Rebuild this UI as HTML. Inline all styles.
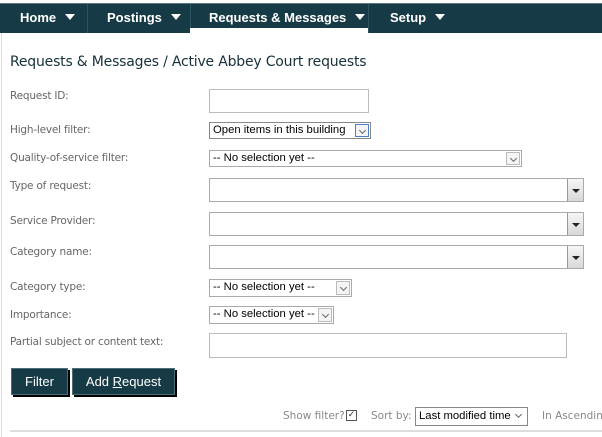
<!DOCTYPE html>
<html><head><style>
*{margin:0;padding:0;box-sizing:border-box}
body{width:602px;height:437px;background:#fff;position:relative;overflow:hidden;font-family:"DejaVu Sans","Liberation Sans",sans-serif}
.a{position:absolute}
.nav{left:0;top:3px;width:602px;height:30px;background:#173b46;border-top:1px solid #5a7a82}
.ni{position:absolute;top:0;height:29px;color:#fff;font-family:"Liberation Sans",sans-serif;font-size:13px;line-height:27px;font-weight:bold}
.tri{display:inline-block;width:0;height:0;border-left:5px solid transparent;border-right:5px solid transparent;border-top:6px solid #fff;margin-left:9px;vertical-align:2px}
.div{position:absolute;top:0;width:1px;height:29px;background:#2b5560}
.lbl{position:absolute;left:10px;font-size:10.5px;color:#666;letter-spacing:-0.2px}
.inp{position:absolute;border:1px solid #bbb;background:#fff}
.sel{position:absolute;border:1px solid #aaa;background:#fff;font-family:"Liberation Sans",sans-serif;font-size:11.3px;color:#000;padding-left:3px;line-height:15px;white-space:nowrap;overflow:hidden}
.arr{position:absolute;right:1px;top:1px;bottom:1px;width:14px;border:1px solid #bbb;background:#f4f4f4}
.arr:after{content:"";position:absolute;left:4px;top:3px;width:4px;height:4px;border-right:1px solid #666;border-bottom:1px solid #666;transform:rotate(45deg)}
.dd{position:absolute;right:0;top:0;bottom:0;width:16px;border-left:1px solid #999;background:linear-gradient(#f6f6f6,#d8d8d8)}
.dd:after{content:"";position:absolute;left:4px;top:10px;border-left:4px solid transparent;border-right:4px solid transparent;border-top:4px solid #222}
.btn{position:absolute;top:368px;height:27px;background:#173b46;color:#fff;font-family:"Liberation Sans",sans-serif;font-size:13px;line-height:25px;text-align:center;box-shadow:2px 2px 0 #000;border:1px solid #4d6e76}
</style></head><body>
<div class="a" style="left:1px;top:33px;width:1px;height:404px;background:#ddd"></div>
<div class="a nav">
 <div class="ni" style="left:20px">Home<span class="tri"></span></div>
 <div class="div" style="left:87px"></div>
 <div class="ni" style="left:107px">Postings<span class="tri"></span></div>
 <div class="div" style="left:190px"></div>
 <div class="ni" style="left:209px">Requests &amp; Messages<span class="tri"></span></div>
 <div class="div" style="left:368px"></div>
 <div class="ni" style="left:390px">Setup<span class="tri"></span></div>
</div>
<div class="a" style="left:190px;top:28px;width:178px;height:5px;background:#fff"></div>
<div class="a" style="left:10px;top:54px;font-size:14px;color:#17303a;letter-spacing:-0.2px">Requests &amp; Messages / Active Abbey Court requests</div>

<div class="lbl" style="top:90px">Request ID:</div>
<div class="inp" style="left:209px;top:89px;width:160px;height:24px"></div>

<div class="lbl" style="top:124px">High-level filter:</div>
<div class="sel" style="left:209px;top:122px;width:162px;height:17px;border-color:#888">Open items in this building<div class="arr" style="border-color:#4a7fc0"></div></div>

<div class="lbl" style="top:152px">Quality-of-service filter:</div>
<div class="sel" style="left:209px;top:150px;width:313px;height:17px">-- No selection yet --<div class="arr"></div></div>

<div class="lbl" style="top:180px">Type of request:</div>
<div class="inp" style="left:209px;top:178px;width:375px;height:24px;border-color:#aaa"><div class="dd"></div></div>

<div class="lbl" style="top:215px">Service Provider:</div>
<div class="inp" style="left:209px;top:212px;width:375px;height:24px;border-color:#aaa"><div class="dd"></div></div>

<div class="lbl" style="top:246px">Category name:</div>
<div class="inp" style="left:209px;top:245px;width:375px;height:24px;border-color:#aaa"><div class="dd"></div></div>

<div class="lbl" style="top:281px">Category type:</div>
<div class="sel" style="left:209px;top:279px;width:143px;height:18px">-- No selection yet --<div class="arr"></div></div>

<div class="lbl" style="top:309px">Importance:</div>
<div class="sel" style="left:209px;top:306px;width:125px;height:18px">-- No selection yet --<div class="arr"></div></div>

<div class="lbl" style="top:336px">Partial subject or content text:</div>
<div class="inp" style="left:209px;top:333px;width:358px;height:25px"></div>

<div class="btn" style="left:11px;width:57px">Filter</div>
<div class="btn" style="left:72px;width:103px">Add <u>R</u>equest</div>

<div class="a" style="left:283px;top:410px;font-size:10.5px;color:#888">Show filter?</div>
<div class="a" style="left:346px;top:410px;width:11px;height:11px;border:1px solid #555;font-size:9px;line-height:9px;text-align:center;color:#333">&#10003;</div>
<div class="a" style="left:371px;top:410px;font-size:10.5px;color:#888">Sort by:</div>
<div class="sel" style="left:415px;top:407px;width:113px;height:19px;border-color:#888;line-height:17px">Last modified time<div class="arr" style="border:none;background:#fff"></div></div>
<div class="a" style="left:542px;top:410px;font-size:10.5px;color:#888;white-space:nowrap">In Ascending</div>
<div class="a" style="left:10px;top:430px;width:592px;height:2px;background:#ddd"></div>
</body></html>
